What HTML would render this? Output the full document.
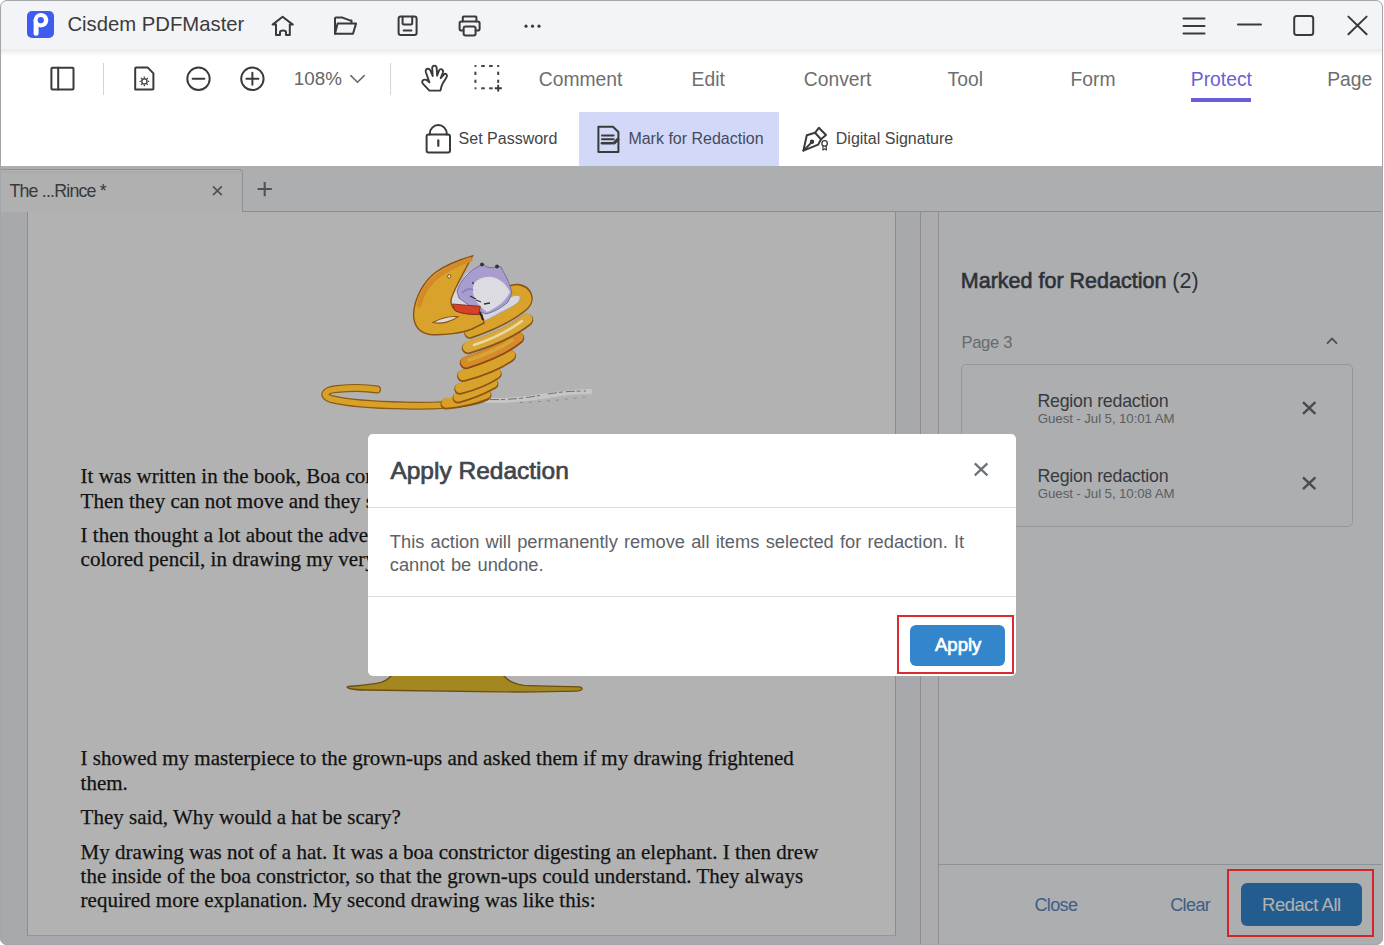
<!DOCTYPE html>
<html><head><meta charset="utf-8">
<style>
*{box-sizing:border-box;margin:0;padding:0}
html,body{width:1384px;height:945px;overflow:hidden;background:#ffffff;font-family:"Liberation Sans",sans-serif}
.a{position:absolute}
.t{position:absolute;white-space:nowrap;line-height:20px}
#win{position:absolute;left:0;top:0;width:1383px;height:945px;border-radius:7px;overflow:hidden;background:#fff}
#frame{position:absolute;left:0;top:0;width:1383px;height:945px;border:1.5px solid #a4a5a8;border-radius:7px;pointer-events:none}
#title{position:absolute;left:0;top:0;width:1384px;height:49px;background:#f3f4f8}
#shadow{position:absolute;left:0;top:49px;width:1384px;height:8px;background:linear-gradient(#ececec 0,#eeeeee 1.5px,#f6f6f6 4px,#fcfcfc 6px,#fff 8px)}
#tb{position:absolute;left:0;top:50px;width:1384px;height:116px}
svg{position:absolute;overflow:visible}
.ic{fill:none;stroke:#3a3a3a;stroke-width:2;stroke-linecap:round;stroke-linejoin:round}
.tab{font-size:19.3px;color:#6e6e6e}
.sub{font-size:16px;color:#454545}
</style></head><body>
<div id="win">
 <div id="title">
  <!-- logo -->
  <div class="a" style="left:27.2px;top:11px;width:26.8px;height:26.8px;border-radius:5px;background:#3f5cf2"></div>
  <svg style="left:0;top:0" width="60" height="50"><circle cx="41" cy="20.2" r="7.3" fill="#fff"/><path d="M36.1 20 V33.2" stroke="#fff" stroke-width="5" stroke-linecap="round"/><circle cx="40.8" cy="20.2" r="3.1" fill="#3f5cf2"/></svg>
  <div class="t" style="left:67.4px;top:14.2px;font-size:20.3px;color:#3b3b3b">Cisdem PDFMaster</div>
  <svg style="left:0;top:0" width="1384" height="50">
   <g class="ic">
    <path d="M276 35 V24.6 H272.6 L282.6 16.8 L292.8 24.6 H289.8 V35 H286 V32.2 Q286 30.6 283 30.6 Q280 30.6 280 32.2 V35 Z"/>
    <path d="M335 33.8 V18.6 Q335 17.6 336 17.6 H342.5 L350.5 20.6 H351.5 V23.2"/>
    <path d="M335 33.8 L337.6 23.6 H356 L353 33.8 Z"/>
    <rect x="398.6" y="16.6" width="18" height="18.4" rx="2.2"/>
    <path d="M402.6 16.8 V23.6 Q402.6 24.4 403.4 24.4 H411.4 Q412.2 24.4 412.2 23.6 V16.8"/>
    <path d="M403.6 30.6 H411.4"/>
    <path d="M462.8 21.4 V17.2 Q462.8 16.6 463.6 16.6 H475.6 Q476.4 16.6 476.4 17.2 V21.4"/>
    <path d="M463.4 30.6 H461.4 Q459.6 30.6 459.6 28.8 V23.2 Q459.6 21.4 461.4 21.4 H477.8 Q479.6 21.4 479.6 23.2 V28.8 Q479.6 30.6 477.8 30.6 H475.6"/>
    <rect x="463.6" y="26.4" width="12" height="9" rx="2"/>
    <path d="M1183.5 18.6 H1204.5 M1183.5 26 H1204.5 M1183.5 33.6 H1204.5"/>
    <path d="M1238 24.5 H1261"/>
    <rect x="1294.2" y="16" width="19" height="19" rx="2.5"/>
    <path d="M1348.4 16.6 L1366.6 34.2 M1366.6 16.6 L1348.4 34.2"/>
   </g>
   <g fill="#3a3a3a"><circle cx="526" cy="26.2" r="1.6"/><circle cx="532.5" cy="26.2" r="1.6"/><circle cx="539" cy="26.2" r="1.6"/></g>
  </svg>
 </div>
 <div id="shadow"></div>
 <div id="tb">
  <svg style="left:0;top:-50px" width="1384" height="166">
   <g class="ic" stroke="#444">
    <rect x="51.4" y="67.8" width="22.1" height="21.7" rx="1"/>
    <path d="M58.2 67.8 V89.5"/>
    <path d="M135.2 89.5 V68.6 Q135.2 67.6 136.2 67.6 H147.8 L153.4 73.4 V88.7 Q153.4 89.5 152.6 89.5 H136.2 Q135.2 89.5 135.2 88.7 Z" />
    <circle cx="198.5" cy="78.8" r="11.2"/>
    <path d="M192.6 78.8 H204.4"/>
    <circle cx="252.4" cy="78.8" r="11.2"/>
    <path d="M246.4 78.8 H258.4 M252.4 72.8 V84.8"/>
    <path d="M350.8 75.6 L357.5 82.2 L364.2 75.6" stroke="#666" stroke-width="1.5"/>
    <path d="M429.4 90.6 L422.8 83.6 Q421.2 81.2 423.6 79.9 Q425.6 79 427.6 80.8 L429.4 82.4 L425.9 72.2 Q425.1 69.2 427.6 68.8 Q429.8 68.5 430.6 71 L432.7 76 L432.2 68.2 Q432.2 65.6 434.4 65.6 Q436.6 65.6 436.7 68.2 L437.1 75.6 L438.9 70.8 Q439.9 68.6 441.8 69.3 Q443.6 70.1 442.9 72.5 L440.7 78.2 L443.8 74.6 Q445.2 73.2 446.5 74.4 Q447.6 75.6 446.4 77.4 L442.8 83.2 Q441.2 86.2 440.4 90.6 Z" stroke-width="1.9"/>
    <g fill="#444" stroke="none"><rect x="474.6" y="65.0" width="1.8" height="2"/><rect x="481.2" y="65.0" width="3.6" height="2"/><rect x="489.1" y="65.0" width="3.6" height="2"/><rect x="474.6" y="87.3" width="1.8" height="2"/><rect x="481.2" y="87.3" width="3.6" height="2"/><rect x="489.1" y="87.3" width="3.6" height="2"/><rect x="497.2" y="65" width="2" height="2"/><rect x="474.4" y="71.7" width="2" height="3.3"/><rect x="474.4" y="79.7" width="2" height="3.2"/><rect x="497.2" y="71.7" width="2" height="3.3"/><rect x="497.2" y="79.7" width="2" height="3.2"/></g><path d="M494.8 88.3 H501.8 M498.2 84.8 V91.6" stroke-width="1.9" stroke-linecap="butt"/>
   </g>
   <g stroke="#444" stroke-width="1.4" fill="none">
    <circle cx="144.4" cy="81.4" r="2.6"/>
    <path d="M144.4 76.6 V77.8 M144.4 85 V86.2 M139.6 81.4 H140.8 M148 81.4 H149.2 M141 78 L141.8 78.8 M147 84 L147.8 84.8 M147.8 78 L147 78.8 M141.8 84 L141 84.8"/>
   </g>
   <path d="M103.5 63 V95 M390.6 63 V95" stroke="#d4d4d4" stroke-width="1"/>
   <rect x="1191" y="98" width="60" height="4" fill="#6a5fd9"/>
  </svg>
  <div class="t tab" style="left:293.8px;top:18.8px;font-size:18.8px;color:#666">108%</div>
  <div class="t tab" style="left:538.8px;top:19.6px">Comment</div>
  <div class="t tab" style="left:691.6px;top:19.6px">Edit</div>
  <div class="t tab" style="left:803.8px;top:19.6px">Convert</div>
  <div class="t tab" style="left:947.6px;top:19.6px">Tool</div>
  <div class="t tab" style="left:1070.6px;top:19.6px">Form</div>
  <div class="t tab" style="left:1190.8px;top:19.6px;color:#6a60d4">Protect</div>
  <div class="t tab" style="left:1327.2px;top:19.6px">Page</div>
  <div class="a" style="left:579px;top:62px;width:200px;height:54px;background:#d2d9f8"></div>
  <svg style="left:0;top:-50px" width="1384" height="166">
   <g class="ic" stroke="#444" stroke-width="1.8">
    <rect x="426.6" y="134.4" width="23.4" height="18" rx="2"/>
    <path d="M429.8 134.4 V133.6 A8.5 8.5 0 0 1 446.8 133.6 V134.4"/>
    <path d="M438.3 140.4 V145.8" stroke-width="2.2"/>
   </g>
   <g class="ic" stroke="#3b3f4c" stroke-width="1.8">
    <path d="M598.4 152 V126.8 H613 L618.4 132 V152 Z"/>
    <path d="M602 135.4 H613.6 M602 139.2 H613.6"/>
    <path d="M602 143.2 H612" stroke-width="2.6"/>
    <path d="M612.5 143 L617 138.5 L619.2 139.6 L614.8 144 Z" fill="#3b3f4c" stroke-width="1"/>
   </g>
   <g class="ic" stroke="#444" stroke-width="1.7">
    <path d="M803.4 150.6 L806.8 135.2 L815 132.8 L821 139.2 L818.2 144.6 Z"/>
    <path d="M815 132.8 L818.8 127.8 L826 135 L821 139.2"/>
    <path d="M803.4 150.6 L811.4 142.6"/>
    <circle cx="812" cy="141.8" r="1.2" fill="#444"/>
    <circle cx="824.6" cy="143.4" r="2.7" stroke-width="1.3"/>
    <path d="M823 146.2 L822.8 150 L824.6 148.8 L826.4 150 L826.2 146.2" stroke-width="1.1"/>
   </g>
  </svg>
  <div class="t sub" style="left:458.6px;top:79.4px">Set Password</div>
  <div class="t sub" style="left:628.4px;top:79.4px;color:#464a5a">Mark for Redaction</div>
  <div class="t sub" style="left:835.8px;top:79.2px">Digital Signature</div>
 </div>
 <div id="content" class="a" style="left:0;top:166px;width:1384px;height:779px;background:#f1f3f6;overflow:hidden">
  <div class="a" style="left:0;top:0;width:1384px;height:46px;background:#f8f9fb;border-bottom:1px solid #cbccd0"></div>
  <div class="a" style="left:-2px;top:3px;width:245px;height:43px;background:#fcfcfd;border:1px solid #cfd0d4;border-bottom:none;border-radius:4px 4px 0 0;box-shadow:inset 0 1px 0 #fff,inset 0 3px 0 #f4f5f7"></div>
  <div class="t" style="left:9.4px;top:14.8px;font-size:17.8px;color:#505459;letter-spacing:-0.8px">The ...Rince *</div>
  <svg style="left:0;top:0" width="300" height="45"><path d="M213 20.4 L221.8 29.2 M221.8 20.4 L213 29.2" stroke="#73777c" stroke-width="1.7" fill="none"/><path d="M257.6 23 H271.8 M264.7 16 V30.2" stroke="#73777c" stroke-width="2.1" fill="none"/></svg>
  <!-- page -->
  <div id="doc" class="a" style="left:0;top:46px;width:920px;height:733px;overflow:hidden">
   <div id="page" class="a" style="left:27px;top:-20px;width:869px;height:744px;background:#fff;border:1px solid #c8c9cc;border-bottom-color:#d6d7da;font-family:'Liberation Serif',serif;color:#1a1a1a;-webkit-text-stroke:0.25px #1a1a1a">
    <div class="t" style="left:52.6px;top:271.3px;font-size:21px;line-height:24px">It was written in the book, Boa constrictors swallow their prey whole, without chewing it.</div>
    <div class="t" style="left:52.6px;top:295.5px;font-size:21px;line-height:24px">Then they can not move and they sleep during the six months of their digestion.</div>
    <div class="t" style="left:52.6px;top:329.8px;font-size:21px;line-height:24px">I then thought a lot about the adventures of the jungle and, in turn, I succeeded, with a</div>
    <div class="t" style="left:52.6px;top:353.8px;font-size:21px;line-height:24px">colored pencil, in drawing my very first drawing. My drawing number 1. It was like this:</div>
    <div class="t" style="left:52.6px;top:553.4px;font-size:21px;line-height:24px">I showed my masterpiece to the grown-ups and asked them if my drawing frightened</div>
    <div class="t" style="left:52.6px;top:577.6px;font-size:21px;line-height:24px">them.</div>
    <div class="t" style="left:52.6px;top:612.4px;font-size:21px;line-height:24px">They said, Why would a hat be scary?</div>
    <div class="t" style="left:52.6px;top:646.8px;font-size:21px;line-height:24px">My drawing was not of a hat. It was a boa constrictor digesting an elephant. I then drew</div>
    <div class="t" style="left:52.6px;top:671.4px;font-size:21px;line-height:24px">the inside of the boa constrictor, so that the grown-ups could understand. They always</div>
    <div class="t" style="left:52.6px;top:695.4px;font-size:21px;line-height:24px">required more explanation. My second drawing was like this:</div>
   </div>
  </div>
  <div class="a" style="left:920px;top:46px;width:1px;height:733px;background:#cbccd0"></div>
  <div class="a" style="left:921px;top:46px;width:17px;height:733px;background:#f6f7f9"></div>
  <div class="a" style="left:938px;top:46px;width:1px;height:733px;background:#cbccd0"></div>
  <div class="a" style="left:939px;top:46px;width:445px;height:733px;background:#f8f9fc"></div>
  <div class="a" style="left:939px;top:697.5px;width:445px;height:1px;background:#cfd0d4"></div>
  <div class="t" style="left:960.8px;top:102.9px;font-size:21.5px;line-height:24px;color:#414852"><span style="-webkit-text-stroke:0.6px #414852">Marked for Redaction</span> (2)</div>
  <div class="t" style="left:961.4px;top:167.0px;font-size:16.6px;line-height:20px;color:#9298a2;letter-spacing:-0.3px">Page 3</div>
  <svg style="left:0;top:0" width="1384" height="779"><path d="M1327 177.6 L1332 172.6 L1337 177.6" stroke="#6d7279" stroke-width="1.8" fill="none"/></svg>
  <div class="a" style="left:960.6px;top:197.5px;width:392.4px;height:163.3px;border:1.2px solid #d6d7db;border-radius:5px;background:#f8f9fc"></div>
  <div class="t" style="left:1037.4px;top:224.6px;font-size:17.8px;line-height:20px;color:#50555b;letter-spacing:-0.22px">Region redaction</div>
  <div class="t" style="left:1037.8px;top:244.8px;font-size:13.3px;line-height:16px;color:#84898f;letter-spacing:-0.1px">Guest - Jul 5, 10:01 AM</div>
  <div class="t" style="left:1037.4px;top:299.8px;font-size:17.8px;line-height:20px;color:#50555b;letter-spacing:-0.22px">Region redaction</div>
  <div class="t" style="left:1037.8px;top:319.8px;font-size:13.3px;line-height:16px;color:#84898f;letter-spacing:-0.1px">Guest - Jul 5, 10:08 AM</div>
  <svg style="left:0;top:0" width="1384" height="779"><path d="M1303 236.2 L1315.4 247.8 M1315.4 236.2 L1303 247.8 M1303 311.4 L1315.4 323.2 M1315.4 311.4 L1303 323.2" stroke="#6a6e74" stroke-width="2.5" fill="none"/></svg>
  <div class="t" style="left:1034.4px;top:728.4px;font-size:18px;line-height:22px;color:#5a87c0;letter-spacing:-0.6px">Close</div>
  <div class="t" style="left:1170.2px;top:728.4px;font-size:18px;line-height:22px;color:#5a87c0;letter-spacing:-0.6px">Clear</div>
  <div class="a" style="left:1241px;top:717px;width:121px;height:42.7px;border-radius:6px;background:#3385cc"></div>
  <div class="t" style="left:1262.0px;top:728.4px;font-size:18.4px;line-height:22px;color:#fff;letter-spacing:-0.4px">Redact All</div>
 </div>
 <div id="overlay" class="a" style="left:0;top:166px;width:1384px;height:779px;background:rgba(0,0,0,0.3)"></div>

 <svg id="art" style="left:0;top:0" width="1384" height="945">
  <defs>
   <filter id="blur1" x="-10%" y="-10%" width="120%" height="120%"><feGaussianBlur stdDeviation="0.6"/></filter>
  </defs>
  <g filter="url(#blur1)">
  <!-- gray shadow tail right -->
  <path d="M486 400.5 C505 401 525 399.5 545 396 C560 393.5 575 391.5 590 391.5" stroke="#c6c6c4" stroke-width="5" fill="none" stroke-linecap="round"/>
  <path d="M490 399.5 C510 400 525 398 540 395.5 M548 394 C560 392 570 391 586 391" stroke="#707070" stroke-width="1" fill="none" stroke-dasharray="9 2 4 3"/>
  <path d="M520 402.5 C540 402 560 400 585 397" stroke="#8a8a8a" stroke-width="1" fill="none" stroke-dasharray="3 6"/>
  <!-- tail -->
  <path d="M486 397 C472 404 445 406.5 405 405.5 C375 405 345 402.5 331 399 C321 395.5 325 390 337 389 C352 387.5 366 387.5 377 389.5" stroke="#8a5a14" stroke-width="8" fill="none" stroke-linecap="round"/>
  <path d="M486 397 C472 404 445 406.5 405 405.5 C375 405 345 402.5 331 399 C321 395.5 325 390 337 389 C352 387.5 366 387.5 377 389.5" stroke="#d7a028" stroke-width="5.6" fill="none" stroke-linecap="round"/>
  
  <path d="M451 300 L456 288 L466 274 L478 266 L503 270 L512 288 L521 292 L518 303 L500 312 L486 320 L480 316 L455 311 Z" fill="#d9d7de"/>
  <!-- coils bottom to top -->
  <g stroke-linecap="round" fill="none">
   <path d="M446 404 C460 403 476 399 486 395" stroke="#8a5214" stroke-width="11.0"/>
   <path d="M446 403 C460 402 476 398 486 394" stroke="#d7a028" stroke-width="9.3"/>
   <path d="M458 398 C470 395 482 390 493 384" stroke="#8a5214" stroke-width="11.0"/>
   <path d="M458 397 C470 394 482 389 493 383" stroke="#d9a22a" stroke-width="9.3"/>
   <path d="M460 389 C472 386 485 381 496 374" stroke="#8a5214" stroke-width="11.5"/>
   <path d="M460 388 C472 385 485 380 496 373" stroke="#d9a22a" stroke-width="9.8"/>
   <path d="M463 376 C478 372 496 366 510 356" stroke="#8a5214" stroke-width="12.0"/>
   <path d="M463 375 C478 371 496 365 510 355" stroke="#d9a22a" stroke-width="10.3"/>
   <path d="M466 363 C482 358 504 350 518 338" stroke="#8a4814" stroke-width="12.5"/>
   <path d="M466 362 C482 357 504 349 518 337" stroke="#d68a2c" stroke-width="10.8"/>
   <path d="M469 360 C484 355 500 349 512 340" stroke="#d6a636" stroke-width="3.5"/>
   <path d="M468 348 C488 342 512 332 527 320" stroke="#8a5214" stroke-width="12.5"/>
   <path d="M468 347 C488 341 512 331 527 319" stroke="#d9a838" stroke-width="10.8"/>
   <path d="M474 345 C492 339 510 330 522 321" stroke="#e8d9a0" stroke-width="2.5"/>
   <path d="M470 333 C490 326 512 316 524 305 C529.5 299 527 291 518 289.5 C513 289 509 291 505 294" stroke="#8a5214" stroke-width="11.5"/>
   <path d="M470 332 C490 325 512 315 524 304 C528.5 299 526 292 518 290.5 C513 290 509.5 292 506 294.5" stroke="#d9a22a" stroke-width="10.3"/>
  </g>
  <!-- mouse -->
  <path d="M457 291 C460 281 469 271 479 266 L483 264 L487 267 C491 268 495 268 498 266 L501 267 L503 271 C507 277 510 285 512 293 L508 302 C500 309 493 312 486 314 C478 311 468 305 459 298 Z" fill="#a99dd0" stroke="#6f6890" stroke-width="0.9"/>
  <path d="M474 283 C486 272 502 276 510 292 C505 302 496 308 487 312 C478 306 470 296 474 283 Z" fill="#dcdbe2"/>
  <path d="M462 293 C466 289 470 288 473 290" stroke="#8e83b8" stroke-width="2" fill="none"/>
  <path d="M470 296 L476 299 M476 300 L481 302 M484 304 L490 303" stroke="#333" stroke-width="1.3" fill="none"/>
  <circle cx="482" cy="264.5" r="1.9" fill="#333"/><circle cx="497" cy="266.5" r="1.9" fill="#333"/>
  <circle cx="473" cy="283" r="1.2" fill="#555"/>
  <!-- head -->
  <path d="M472.5 256 C462 259 446 265 436 272 C424 281 414 298 413.5 315 C414 326 420 333 430 334.5 C445 335.5 462 333 472 329 L484 323 L482 314.5 C472 314.5 460 313.5 455 310 C450.5 306 450 300 453 294 C458 282 466 268 472.5 256 Z" fill="#d9a22a" stroke="#8a5214" stroke-width="1.4"/>
  <path d="M470 259.5 C458 264 444 270 434 279 C426 287 421 296 419 305" stroke="#d58a2c" stroke-width="5" fill="none" stroke-linecap="round"/>
  <path d="M452.6 304 C462 305 471 305.5 480.3 306.3 L479 314.4 C470 314.5 460 313.5 455 310.5 Z" fill="#d8412a" stroke="#7a3010" stroke-width="0.9"/>
  <path d="M433 322.5 C440 318.5 450 316 458 316.6 C452 321.5 442 324.5 433 322.5 Z" fill="#d9d9d6" stroke="#8a5214" stroke-width="1.1"/>
  <circle cx="449.2" cy="276.4" r="1.7" fill="#ebe6d8" stroke="#6a4010" stroke-width="0.8"/>
  <path d="M480 312 L483 320" stroke="#222" stroke-width="2"/>
  <!-- hat brim (second drawing) -->
  <path d="M347.6 686.6 C358 685.6 372 684.8 381 682.4 C386 680.8 389 678.5 392 675 L503 675 C507 680 513 684 524 685.4 C545 686.4 566 686.2 579.6 686.8 C583.6 687.8 583 691 576 691.2 C552 691.6 525 692.4 498 691.8 C455 691 410 690.4 365 690 C352 689.8 345.4 688 347.6 686.6 Z" fill="#a38824" stroke="#6a5010" stroke-width="1.3"/>
  </g>
 </svg>
 <div id="modal" class="a" style="left:368px;top:434px;width:648px;height:242.4px;background:#fff;border-radius:5px;overflow:hidden">
  <div class="t" style="left:22.4px;top:22.8px;font-size:24.5px;line-height:28px;color:#3f454b;-webkit-text-stroke:0.7px #3f454b">Apply Redaction</div>
  <svg style="left:0;top:0" width="648" height="243"><path d="M606.8 29.4 L619.4 41.4 M619.4 29.4 L606.8 41.4" stroke="#6b7277" stroke-width="2.2" fill="none"/></svg>
  <div class="a" style="left:0;top:73px;width:648px;height:1px;background:#dadbdd"></div>
  <div class="t" style="left:21.8px;top:97.3px;font-size:18.3px;line-height:22.7px;color:#5c6268;white-space:normal;width:600px;word-spacing:1.15px">This action will permanently remove all items selected for redaction. It cannot be undone.</div>
  <div class="a" style="left:0;top:162px;width:648px;height:1px;background:#dadbdd"></div>
  <div class="a" style="left:542px;top:191.2px;width:94.8px;height:40.4px;background:#3385cc;border-radius:6px"></div>
  <div class="t" style="left:567px;top:199.6px;font-size:18.5px;line-height:22px;color:#fff;-webkit-text-stroke:0.7px #fff">Apply</div>
 </div>
 <div class="a" style="left:896.8px;top:614.7px;width:117px;height:59px;border:2px solid #dc2a2e"></div>
 <div class="a" style="left:1227px;top:869px;width:147.3px;height:68px;border:2px solid #d42428"></div>

</div>
<div id="frame"></div>
</body></html>
